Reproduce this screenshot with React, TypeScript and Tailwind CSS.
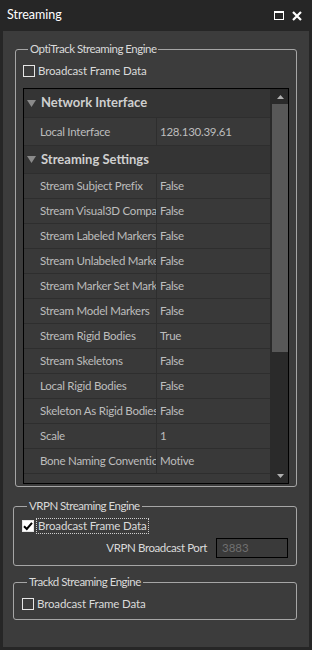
import React from 'react';

const font = { fontFamily: 'Lato, "Noto Sans", sans-serif' };

const props = [
    { name: 'Stream Subject Prefix', value: 'False' },
    { name: 'Stream Visual3D Compat', value: 'False' },
    { name: 'Stream Labeled Markers', value: 'False' },
    { name: 'Stream Unlabeled Marke', value: 'False' },
    { name: 'Stream Marker Set Mark', value: 'False' },
    { name: 'Stream Model Markers', value: 'False' },
    { name: 'Stream Rigid Bodies', value: 'True' },
    { name: 'Stream Skeletons', value: 'False' },
    { name: 'Local Rigid Bodies', value: 'False' },
    { name: 'Skeleton As Rigid Bodies', value: 'False' },
    { name: 'Scale', value: '1' },
    { name: 'Bone Naming Conventio', value: 'Motive' },
];

const Check = ({ checked }: { checked?: boolean }) => (
    <span className={`w-[12px] h-[12px] shrink-0 border border-[#e6e6e6] flex items-center justify-center ${checked ? 'bg-white' : ''}`}>
        {checked && (
            <svg width="10" height="10" viewBox="0 0 10 10">
                <path d="M1 5.2 L3.8 8 L9 1.8" fill="none" stroke="#000" strokeWidth="2" />
            </svg>
        )}
    </span>
);

const Category = ({ title, h }: { title: string; h: string }) => (
    <div className={`flex items-center ${h} bg-[#343434] border-b border-[#2e2e2e]`}>
        <svg width="9" height="7" viewBox="0 0 9 7" className="ml-[3px] mr-[5px]">
            <path d="M0 0 H9 L4.5 7 Z" fill="#8a8a8a" />
        </svg>
        <span className="text-[13px] font-bold text-[#cfcfcf]">{title}</span>
    </div>
);

const Row = ({ name, value, h = 'h-[25px]' }: { name: string; value: string; h?: string }) => (
    <div className={`flex ${h} border-b border-[#2e2e2e] text-[11.5px] tracking-[-0.25px] text-[#bdbdbd]`}>
        <div className="w-[133px] pl-[16px] flex items-center overflow-hidden whitespace-nowrap border-r border-[#2e2e2e]">
            {name}
        </div>
        <div className="flex-1 pl-[3px] flex items-center whitespace-nowrap">{value}</div>
    </div>
);

const legend = 'ml-[5px] px-[2px] text-[11.5px] tracking-[-0.5px] leading-[14px] text-[#dadada]';
const label = 'text-[11.5px] tracking-[-0.15px] text-[#dadada]';

const App = () => {
    return (
        <div className="w-[312px] h-[650px] bg-[#262626] flex flex-col select-none" style={font}>
            {/* title bar */}
            <div className="h-[31px] flex items-center pl-[7px] pr-[10px] shrink-0">
                <span className="text-[12.5px] text-white">Streaming</span>
                <div className="ml-auto flex items-center gap-[8px]">
                    <span className="w-[10px] h-[9px] border border-white border-t-2" />
                    <svg width="10" height="10" viewBox="0 0 10 10">
                        <path d="M1 1 L9 9 M9 1 L1 9" stroke="#fff" strokeWidth="2.2" />
                    </svg>
                </div>
            </div>

            {/* panel */}
            <div className="mx-[3px] h-[616px] bg-[#3c3c3c] flex flex-col">
                <fieldset className="mt-[11px] ml-[12px] mr-[12px] border border-[#a6a6a6] rounded-[3px] px-[7px] pb-[2px]">
                    <legend className={legend}>OptiTrack Streaming Engine</legend>
                    <div className={`mt-[6px] h-[18px] flex items-center gap-[3px] ${label}`}>
                        <Check />
                        <span>Broadcast Frame Data</span>
                    </div>
                    <div className="mt-[8px] h-[396px] border border-black bg-[#393939] flex">
                        <div className="flex-1 border-r-2 border-[#2a2a2a] flex flex-col">
                            <Category title="Network Interface" h="h-[29px]" />
                            <Row name="Local Interface" value="128.130.39.61" h="h-[28px]" />
                            <Category title="Streaming Settings" h="h-[28px]" />
                            {props.map((p) => (
                                <Row key={p.name} name={p.name} value={p.value} />
                            ))}
                        </div>
                        <div className="w-[16px] bg-[#2a2a2a] flex flex-col">
                            <div className="h-[15px] flex items-center justify-center">
                                <svg width="7" height="4" viewBox="0 0 7 4">
                                    <path d="M0 4 L3.5 0 L7 4 Z" fill="#b0b0b0" />
                                </svg>
                            </div>
                            <div className="h-[248px] bg-[#585858]" />
                            <div className="flex-1" />
                            <div className="h-[15px] flex items-center justify-center">
                                <svg width="7" height="4" viewBox="0 0 7 4">
                                    <path d="M0 0 L7 0 L3.5 4 Z" fill="#b0b0b0" />
                                </svg>
                            </div>
                        </div>
                    </div>
                </fieldset>

                <fieldset className="mt-[12px] ml-[10px] mr-[12px] border border-[#a6a6a6] rounded-[3px] px-[8px] pb-[7px]">
                    <legend className={legend}>VRPN Streaming Engine</legend>
                    <div className={`mt-[5px] h-[16px] flex items-center ${label}`}>
                        <Check checked />
                        <span className="ml-[2px] px-[1px] leading-[14px] border border-dotted border-[#cfcfcf]">Broadcast Frame Data</span>
                    </div>
                    <div className="mt-[4px] flex items-center justify-end gap-[9px] text-[11.5px] tracking-[-0.4px] text-[#dadada]">
                        <span>VRPN Broadcast Port</span>
                        <div className="w-[72px] h-[20px] border border-black bg-[#3a3a3a] pl-[5px] flex items-center text-[#707070] tracking-normal">3883</div>
                    </div>
                </fieldset>

                <fieldset className="mt-[9px] ml-[10px] mr-[12px] border border-[#a6a6a6] rounded-[3px] px-[8px] pb-[7px]">
                    <legend className={legend}>Trackd Streaming Engine</legend>
                    <div className={`mt-[7px] h-[16px] flex items-center gap-[3px] ${label}`}>
                        <Check />
                        <span>Broadcast Frame Data</span>
                    </div>
                </fieldset>
            </div>
        </div>
    );
};

export default App;
